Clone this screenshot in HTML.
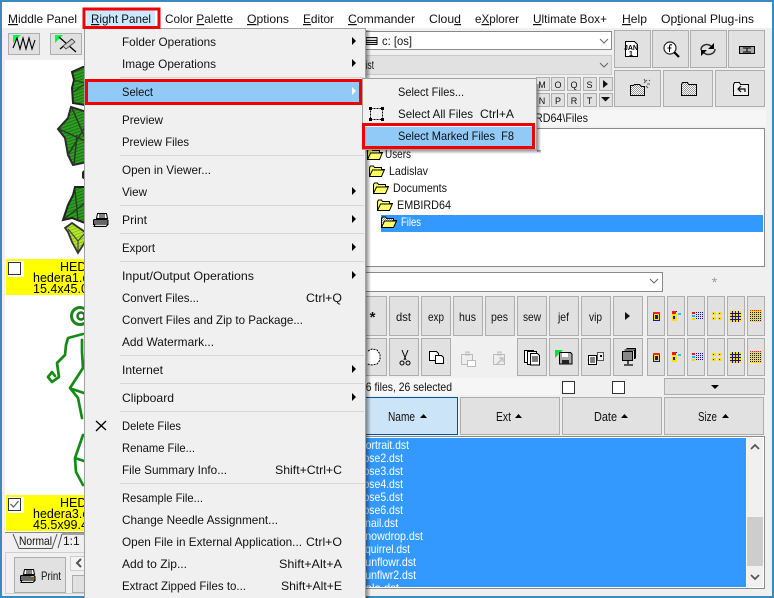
<!DOCTYPE html>
<html><head><meta charset="utf-8"><style>
html,body{margin:0;padding:0;background:#f0f0f0;width:774px;height:598px;overflow:hidden}
svg{display:block;position:absolute;left:0;top:0}
text{font-family:"Liberation Sans",sans-serif;font-size:12px;fill:#111;white-space:pre}
.b{fill:#e1e1e1;stroke:#adadad;stroke-width:1}
.w{fill:#fff;stroke:#8a8a8a;stroke-width:1}
.s{stroke:#d7d7d7;stroke-width:1}
.l{fill:#fff;font-size:12px}
.h{font-size:12.5px}
.y{font-size:12.5px;fill:#000}
.u{text-decoration:underline}
.a{font-size:9px}
</style></head><body>
<svg width="774" height="598" viewBox="0 0 774 598" xmlns="http://www.w3.org/2000/svg">
<defs>
<clipPath id="left"><rect x="5" y="60" width="80" height="538"/></clipPath>
<clipPath id="listc"><rect x="366" y="438" width="381" height="149"/></clipPath>
<linearGradient id="sh" x1="0" x2="1" y1="0" y2="0"><stop offset="0" stop-color="#000" stop-opacity=".42"/><stop offset="1" stop-color="#000" stop-opacity="0"/></linearGradient>
<linearGradient id="shv" x1="0" x2="0" y1="0" y2="1"><stop offset="0" stop-color="#000" stop-opacity=".38"/><stop offset="1" stop-color="#000" stop-opacity="0"/></linearGradient>
<pattern id="dith" width="2" height="2" patternUnits="userSpaceOnUse"><rect width="2" height="2" fill="#fff"/><rect width="1" height="1" fill="#999"/><rect x="1" y="1" width="1" height="1" fill="#999"/></pattern>
<pattern id="ydith" width="2" height="2" patternUnits="userSpaceOnUse"><rect width="2" height="2" fill="#ffff66"/><rect width="1" height="1" fill="#fff"/></pattern>
<pattern id="st" width="3" height="3" patternUnits="userSpaceOnUse" patternTransform="rotate(-20)"><rect width="3" height="3" fill="#2f9e22"/><rect width="3" height="1" fill="#1c7414"/></pattern>
<pattern id="st2" width="3" height="3" patternUnits="userSpaceOnUse" patternTransform="rotate(-20)"><rect width="3" height="3" fill="#b4e82a"/><rect width="3" height="1" fill="#8cc018"/></pattern>
<g id="printer"><path d="M4.500 .5h9l1 5h-11z" fill="#fff" stroke="#000"/><path d="M1 6.500h13l1 1v4H.5v-4z" fill="#666" stroke="#000"/><path d="M2 11.500l-1 2h12l2-2" fill="#ddd" stroke="#000"/><path d="M6 2h6M6 4h6" stroke="#000"/></g>
<g id="f1"><rect x="-3" y="-4" width="7" height="9" fill="#1010c0"/><rect x="-3" y="-4" width="7" height="2" fill="#ff2020"/><rect x="-2" y="-2" width="5" height="6" fill="#ffe000"/><rect x="-1" y="-1" width="3" height="4" fill="#1010c0"/></g>
<g id="f2"><rect x="-4" y="-5" width="4" height="3" fill="#ff1010"/><rect x="-4" y="-2" width="5" height="7" fill="#ffe000"/><rect x="-3" y="0" width="2" height="3" fill="#1010c0"/><rect x="2" y="-3" width="3" height="2" fill="#10d0e0"/><rect x="0" y="-5" width="1" height="1" fill="#1010c0"/></g>
<g id="f3"><rect x="-5" y="-4" width="3" height="2" fill="#ff1010"/><rect x="-5" y="-1" width="3" height="2" fill="#10c0e0"/><rect x="-5" y="2" width="3" height="2" fill="#ffd000"/><path d="M-1 -3.500h7M-1 -1.500h7M-1 .5h7M-1 2.500h7" stroke="#0a0a90" stroke-dasharray="1 1"/></g>
<g id="f4"><rect x="-4" y="-4" width="4" height="3" fill="#ffe000"/><rect x="2" y="-4" width="4" height="3" fill="#ffe000"/><rect x="-4" y="1" width="4" height="3" fill="#ffe000"/><rect x="2" y="1" width="4" height="3" fill="#ffe000"/><rect x="-3" y="-3" width="1" height="1" fill="#1010c0"/><rect x="3" y="-3" width="1" height="1" fill="#1010c0"/><rect x="-3" y="2" width="1" height="1" fill="#1010c0"/><rect x="3" y="2" width="1" height="1" fill="#1010c0"/></g>
<g id="f5"><rect x="-5" y="-5" width="11" height="11" fill="#101080"/><path d="M-5 -4h11M-5 -1h11M-5 2h11M-5 5h11" stroke="#ffe000" stroke-width="2" stroke-dasharray="2 1"/></g>
<g id="f6"><rect x="-6" y="-6" width="12" height="12" fill="#ffe000"/><path d="M-6 -5.500h12" stroke="#ff2020" stroke-dasharray="1 1"/><path d="M-6 -3.500h12M-6 -1.500h12M-6 .5h12M-6 2.500h12M-6 4.500h12" stroke="#101090" stroke-dasharray="1 1"/></g>
<g id="folder"><path d="M.5 3.500v9h12l3-7h-3v-2h-7l-1-1.500h-3z" fill="url(#ydith)" stroke="#000"/><path d="M.5 12.500l3-6.500h12" fill="none" stroke="#000"/></g>
<g id="folderS"><path d="M.5 3.500v9h12l3-7h-3v-2h-7l-1-1.500h-3z" fill="url(#dith)" stroke="#000"/><path d="M3.500 6h12l-3 6.500h-12z" fill="url(#ydith)" stroke="#000"/></g>
</defs>

<!-- window -->
<rect width="774" height="598" fill="#3b89bd"/>
<rect x="2" y="2" width="770" height="594" fill="#f0f0f0"/>
<rect x="2" y="2" width="770" height="26" fill="#fff"/>

<!-- left panel -->
<rect x="8.500" y="33.500" width="31" height="21" class="b"/>
<rect x="50.500" y="33.500" width="31" height="21" class="b"/>
<path d="M13 35h8l-8 8z" fill="#00ff40"/><path d="M13 48l4-10 3 11 3-11 3 11 3-11 3 11 3-9" fill="none" stroke="#000" stroke-width="1.100"/>
<path d="M55 35h8l-8 8z" fill="#00ff40"/><path d="M59 37l17 15M60 49l12-10" stroke="#000" stroke-width="1.300" fill="none"/><path d="M63 46l9-7 3 3-9 7z" fill="#ccc" stroke="#333" stroke-width=".7"/>
<rect x="5" y="60" width="80" height="472" fill="#fff"/>
<g clip-path="url(#left)">
<path d="M83 67L72 72l2 8-2 8 1 15 12 2V67z" fill="url(#st)" stroke="#222" stroke-width="2"/>
<path d="M71 107l-3 11-10 11 7 9 3 17 5 10 14-3V112z" fill="url(#st)" stroke="#2a2a2a" stroke-width="2"/>
<path d="M59 129l26 12M68 155l17-28M72 108l13 30M74 165l3-30" stroke="#2a3a2a" stroke-width="1.500" fill="none"/>
<path d="M74 80l11 3M73 92l12-8" stroke="#1b4a1b" stroke-width="1.300" fill="none"/>
<path d="M82 172l3-3v11l-3-2z" fill="#222"/>
<path d="M75 187l-2 8-5 10-5 15 9-2 13 5v-36z" fill="url(#st)" stroke="#222" stroke-width="2"/>
<path d="M64 219l21-16M75 190l3 30" stroke="#1f3f1f" stroke-width="1.300" fill="none"/>
<path d="M65 228l7-5 13 9v10l-7 11-6-11-4-10z" fill="url(#st2)" stroke="#333" stroke-width="1.800"/>
<path d="M68 229l10 12 0 10M78 241l7-8" stroke="#444" stroke-width="1.200" fill="none"/>
<circle cx="80" cy="316" r="8.500" fill="none" stroke="#1a861a" stroke-width="3"/><circle cx="81" cy="316" r="3.500" fill="none" stroke="#1a7a1a" stroke-width="2.500"/>
<g fill="none" stroke="#158a18" stroke-width="2.700" stroke-linejoin="round" stroke-linecap="round">
<path d="M83 334l-15 4-2 7-1 10-8 8 2 14-7 5-4-5 4-5 3 4"/>
<path d="M82 340v12l1 16-13 20 8 10 4 20M72 389l12 4"/>
<path d="M83 435l-8 23 1 14 7 13M75 458l9 3"/>
</g>
</g>
<rect x="6" y="259" width="79" height="36" fill="#ff0"/>
<rect x="8" y="261" width="16" height="16" fill="#fff"/>
<rect x="8.500" y="262.500" width="12" height="12" fill="#fff" stroke="#333"/>
<rect x="6" y="495" width="79" height="36" fill="#ff0"/>
<rect x="8" y="497" width="16" height="16" fill="#fff"/>
<rect x="8.500" y="498.500" width="12" height="12" fill="#fff" stroke="#333"/>
<path d="M10.500 504l3 3 5-6" fill="none" stroke="#666" stroke-width="1.300"/>
<text class="y" x="60" y="271">HED</text><text class="y" x="33" y="282">hedera1.e</text><text class="y" x="33" y="293">15.4x45.0</text>
<text class="y" x="60" y="507">HED</text><text class="y" x="33" y="518">hedera3.e</text><text class="y" x="33" y="529">45.5x99.4</text>
<path d="M5 532.500H85" stroke="#888"/>
<path d="M13 534l6 14.500h33l5-14.500" fill="#f0f0f0" stroke="#555"/>
<path d="M58 548l4-14M62 534h24" fill="none" stroke="#555"/>
<text x="19" y="545" textLength="33" lengthAdjust="spacingAndGlyphs" fill="#10204a">Normal</text>
<text x="63" y="545">1:1 N</text>
<rect x="5.500" y="552.500" width="90" height="41" fill="none" stroke="#d0d0d0"/>
<rect x="14.500" y="557.500" width="51" height="35" class="b"/>
<use href="#printer" x="20" y="569"/>
<rect x="31" y="576" width="3" height="1" fill="#e8c000"/>
<text x="41" y="580" textLength="20" lengthAdjust="spacingAndGlyphs">Print</text>
<rect x="70.500" y="556.500" width="20" height="14" fill="#f4f4f4" stroke="#ccc"/>
<path d="M81 559l-4 4 4 4" fill="none" stroke="#555" stroke-width="2"/>
<rect x="72.500" y="575.500" width="20" height="17" class="b"/>

<!-- right top -->
<rect x="345.500" y="31.500" width="266" height="18" class="w"/>
<rect x="366" y="37.500" width="11" height="7" fill="#ddd" stroke="#111"/><path d="M366 40.500h11M366 42.500h11" stroke="#111"/>
<text x="382" y="45" textLength="30" lengthAdjust="spacingAndGlyphs">c: [os]</text>
<path d="M600 39l4 4 4-4" fill="none" stroke="#666"/>
<rect x="345.500" y="55.500" width="266" height="19" fill="#e1e1e1" stroke="#c8c8c8"/>
<text x="360" y="69" textLength="14" lengthAdjust="spacingAndGlyphs" fill="#333">Dist</text>
<path d="M600 63l4 4 4-4" fill="none" stroke="#666"/>

<rect x="536.500" y="77.500" width="13" height="13" class="b"/><rect x="551.500" y="77.500" width="13" height="13" class="b"/><rect x="567.500" y="77.500" width="13" height="13" class="b"/><rect x="583.500" y="77.500" width="13" height="13" class="b"/><rect x="599.500" y="77.500" width="13" height="13" class="b"/>
<rect x="536.500" y="93.500" width="13" height="13" class="b"/><rect x="551.500" y="93.500" width="13" height="13" class="b"/><rect x="567.500" y="93.500" width="13" height="13" class="b"/><rect x="583.500" y="93.500" width="13" height="13" class="b"/><rect x="599.500" y="93.500" width="13" height="13" class="b"/>
<text class="a" x="542" y="88" text-anchor="middle">M</text><text class="a" x="558" y="88" text-anchor="middle">O</text><text class="a" x="574" y="88" text-anchor="middle">Q</text><text class="a" x="589.500" y="88" text-anchor="middle">S</text>
<text class="a" x="542" y="104" text-anchor="middle">N</text><text class="a" x="558" y="104" text-anchor="middle">P</text><text class="a" x="574" y="104" text-anchor="middle">R</text><text class="a" x="589.500" y="104" text-anchor="middle">T</text>
<path d="M603 80l5 4-5 4z M601 97h9l-4.500 4.500z" fill="#111"/>

<rect x="614.500" y="30.500" width="36" height="37" class="b"/><rect x="652.500" y="30.500" width="36" height="37" class="b"/><rect x="690.500" y="30.500" width="36" height="37" class="b"/><rect x="728.500" y="30.500" width="36" height="37" class="b"/>
<rect x="614.500" y="70.500" width="46" height="36" class="b"/><rect x="663.500" y="70.500" width="49" height="36" class="b"/><rect x="715.500" y="70.500" width="49" height="36" class="b"/>
<path d="M625.500 41.500h9l3 3v12h-12z" fill="#fff" stroke="#000"/>
<text x="631" y="50" text-anchor="middle" style="font-size:7px;font-weight:bold;fill:#000">JAN</text><text x="631" y="56" text-anchor="middle" style="font-size:7px;font-weight:bold;fill:#000">1</text>
<circle cx="670" cy="48" r="6" fill="#fff" stroke="#222" stroke-width="1.200"/><path d="M674 52l5 5" stroke="#000" stroke-width="2.200"/><path d="M672 45c-2-1-2.500 0-2.500 2v5M667.500 48h4" fill="none" stroke="#000"/>
<path d="M701 50c0-5 6-7 10-4M715 49c0 5-7 7-11 4" fill="none" stroke="#333" stroke-width="1.500"/><path d="M714 43v6h-6z M701 56v-6h6z" fill="#000"/>
<rect x="739.500" y="46.500" width="15" height="7" fill="#aaa" stroke="#000"/><path d="M743 48h8M743 52h8M747 48v4" stroke="#000"/>
<path d="M630.500 85.500h3l1-1h5l2 2h3v9h-14z" fill="url(#dith)" stroke="#000"/><path d="M644 83l3-3M647 84h3M646 86l2 2M645 81l-1-2M649 81l1-1" stroke="#555"/>
<path d="M681.500 84.500l1-2h5l1 2h8v11h-15z" fill="url(#dith)" stroke="#000"/>
<path d="M733.500 84.500l1-2h5l1 2h8v11h-15z" fill="#eee" stroke="#000"/><path d="M741 86l-3 3 3 3M738 89h7v3" fill="none" stroke="#000" stroke-width="1.200"/>

<rect x="350" y="110" width="416" height="16" fill="#f6f6f6"/>
<text x="535" y="122" textLength="53" lengthAdjust="spacingAndGlyphs">RD64\Files</text>
<rect x="350.500" y="128.500" width="414" height="138" fill="#fff" stroke="#8a8a8a"/>
<rect x="381" y="215" width="382" height="17" fill="#3399ff"/>
<use href="#folder" x="367" y="147"/><text x="385" y="158" textLength="26" lengthAdjust="spacingAndGlyphs" fill="#333">Users</text>
<use href="#folder" x="369" y="164"/><text x="389" y="175" textLength="39" lengthAdjust="spacingAndGlyphs" fill="#333">Ladislav</text>
<use href="#folder" x="373" y="181"/><text x="393" y="192" textLength="54" lengthAdjust="spacingAndGlyphs" fill="#333">Documents</text>
<use href="#folder" x="377" y="198"/><text x="397" y="209" textLength="54" lengthAdjust="spacingAndGlyphs" fill="#333">EMBIRD64</text>
<use href="#folderS" x="381" y="215"/><text x="401" y="226" textLength="20" lengthAdjust="spacingAndGlyphs" style="fill:#fff">Files</text>

<rect x="350.500" y="272.500" width="312" height="19" class="w"/>
<path d="M650 279l4 4 4-4" fill="none" stroke="#666"/>
<text x="714.500" y="287" text-anchor="middle" style="font-size:14px;fill:#999">*</text>

<g>
<rect x="357.500" y="296.500" width="29" height="39" class="b"/><rect x="389.500" y="296.500" width="29" height="39" class="b"/><rect x="421.500" y="296.500" width="29" height="39" class="b"/><rect x="453.500" y="296.500" width="29" height="39" class="b"/><rect x="485.500" y="296.500" width="29" height="39" class="b"/><rect x="517.500" y="296.500" width="29" height="39" class="b"/><rect x="549.500" y="296.500" width="29" height="39" class="b"/><rect x="581.500" y="296.500" width="29" height="39" class="b"/><rect x="613.500" y="296.500" width="29" height="39" class="b"/>
<rect x="357.500" y="338.500" width="29" height="37" class="b"/><rect x="389.500" y="338.500" width="29" height="37" class="b"/><rect x="421.500" y="338.500" width="29" height="37" class="b"/><rect x="517.500" y="338.500" width="29" height="37" class="b"/><rect x="549.500" y="338.500" width="29" height="37" class="b"/><rect x="581.500" y="338.500" width="29" height="37" class="b"/><rect x="613.500" y="338.500" width="29" height="37" class="b"/>
<rect x="647.500" y="296.500" width="17" height="39" class="b"/><rect x="667.500" y="296.500" width="17" height="39" class="b"/><rect x="687.500" y="296.500" width="17" height="39" class="b"/><rect x="707.500" y="296.500" width="17" height="39" class="b"/><rect x="727.500" y="296.500" width="17" height="39" class="b"/><rect x="747.500" y="296.500" width="17" height="39" class="b"/>
<rect x="647.500" y="338.500" width="17" height="37" class="b"/><rect x="667.500" y="338.500" width="17" height="37" class="b"/><rect x="687.500" y="338.500" width="17" height="37" class="b"/><rect x="707.500" y="338.500" width="17" height="37" class="b"/><rect x="727.500" y="338.500" width="17" height="37" class="b"/><rect x="747.500" y="338.500" width="17" height="37" class="b"/>
</g>
<text x="372.500" y="322" text-anchor="middle" style="font-size:15px;font-weight:bold">*</text>
<text x="396" y="321" textLength="15" lengthAdjust="spacingAndGlyphs">dst</text><text x="428" y="321" textLength="16" lengthAdjust="spacingAndGlyphs">exp</text><text x="459" y="321" textLength="17" lengthAdjust="spacingAndGlyphs">hus</text><text x="491" y="321" textLength="17" lengthAdjust="spacingAndGlyphs">pes</text><text x="523" y="321" textLength="18" lengthAdjust="spacingAndGlyphs">sew</text><text x="558" y="321" textLength="11" lengthAdjust="spacingAndGlyphs">jef</text><text x="589" y="321" textLength="13" lengthAdjust="spacingAndGlyphs">vip</text>
<path d="M625 312l5 4-5 4z" fill="#111"/>
<use href="#f1" x="656" y="316"/><use href="#f2" x="676" y="316"/><use href="#f3" x="697" y="316"/><use href="#f4" x="716" y="316"/><use href="#f5" x="735" y="316"/><use href="#f6" x="756" y="316"/>
<use href="#f1" x="656" y="357"/><use href="#f2" x="676" y="357"/><use href="#f3" x="697" y="357"/><use href="#f4" x="716" y="357"/><use href="#f5" x="735" y="357"/><use href="#f6" x="756" y="357"/>

<path d="M368 351l4-2 5 1 3 4 0 6-3 4-5 1-5-1" fill="#fff" stroke="#000" stroke-dasharray="2 1"/>
<path d="M402 350l4 10M408 350l-4 10" stroke="#000" fill="none"/><circle cx="402" cy="363" r="2" fill="none" stroke="#000"/><circle cx="408" cy="363" r="2" fill="none" stroke="#000"/>
<path d="M429.500 351.500h7l2 2v7h-9z" fill="#fff" stroke="#000"/><path d="M435.500 355.500h6l2 2v6h-8z" fill="#fff" stroke="#000"/>
<path d="M461.500 354.500h11v10h-11z M466 352h3v3h-3z" fill="#eee" stroke="#bbb"/><rect x="467.500" y="360.500" width="8" height="6" fill="#fff" stroke="#bbb"/>
<path d="M493.500 354.500h11v10h-11z M498 352h3v3h-3z" fill="#eee" stroke="#bbb"/><path d="M497 364l5-5M499 358h4v4" fill="none" stroke="#bbb" stroke-width="1.300"/>
<path d="M524.500 350.500h9v12h-9z" fill="#fff" stroke="#000"/><path d="M527.500 351.500h9v13h-9z" fill="#fff" stroke="#000"/><path d="M530.500 353.500h7l2 2v9.500h-9z" fill="#fff" stroke="#000"/><path d="M532 357h6M532 359h6M532 361h6" stroke="#000"/>
<path d="M555 350h8l-8 8z" fill="#00e040"/><path d="M559.500 352.500h11l1.500 1.500v10h-12.500z" fill="#aaa" stroke="#000"/><rect x="562" y="353" width="6" height="4" fill="#fff"/><rect x="562" y="360" width="7" height="4" fill="#222"/>
<path d="M588.500 355.500h8v9h-8z" fill="#fff" stroke="#000"/><path d="M590 358h5M590 360h5M590 362h5" stroke="#000"/><path d="M597.500 352.500h6v8h-6z" fill="#eee" stroke="#555"/><rect x="600" y="355" width="2" height="2" fill="#000"/>
<path d="M622.500 351.500h10v9h-10z" fill="#888" stroke="#000"/><path d="M624.500 350h10v9" fill="none" stroke="#000"/><path d="M626.500 348.500h9v10" fill="none" stroke="#000"/><path d="M628 361v3M624 365h9" stroke="#000" stroke-width="1.300"/>

<rect x="350" y="378" width="210" height="17" fill="#f6f6f6"/>
<text x="360" y="391" textLength="92" lengthAdjust="spacingAndGlyphs" fill="#222">26 files, 26 selected</text>
<rect x="562.500" y="381.500" width="12" height="12" fill="#fff" stroke="#333"/>
<rect x="612.500" y="381.500" width="12" height="12" fill="#fff" stroke="#333"/>
<rect x="664.500" y="378.500" width="100" height="16" class="b"/>
<path d="M711 385h8l-4 4z" fill="#000"/>
<rect x="350.500" y="397.500" width="107" height="37" fill="#cce4f7" stroke="#005499"/>
<rect x="460.500" y="397.500" width="99" height="37" class="b"/><rect x="562.500" y="397.500" width="99" height="37" class="b"/><rect x="664.500" y="397.500" width="99" height="37" class="b"/>
<text class="h" x="388" y="421" textLength="27" lengthAdjust="spacingAndGlyphs">Name</text><path d="M420 418l3.500-4 3.500 4z" fill="#000"/>
<text class="h" x="496" y="421" textLength="15" lengthAdjust="spacingAndGlyphs">Ext</text><path d="M515 418l3.500-4 3.500 4z" fill="#000"/>
<text class="h" x="594" y="421" textLength="23" lengthAdjust="spacingAndGlyphs">Date</text><path d="M621 418l3.500-4 3.500 4z" fill="#000"/>
<text class="h" x="698" y="421" textLength="19" lengthAdjust="spacingAndGlyphs">Size</text><path d="M722 418l3.500-4 3.500 4z" fill="#000"/>

<rect x="350.500" y="436.500" width="414" height="152" fill="#fff" stroke="#8a8a8a"/>
<rect x="350" y="438" width="396" height="149" fill="#3399ff"/>
<rect x="747" y="438" width="16" height="149" fill="#f0f0f0"/>
<rect x="747" y="517" width="16" height="49" fill="#cdcdcd"/>
<path d="M751 449l4-4 4 4M751 575l4 4 4-4" fill="none" stroke="#555" stroke-width="1.700"/>
<g clip-path="url(#listc)">
<text class="l" style="fill:#fff" x="360" y="449" textLength="49" lengthAdjust="spacingAndGlyphs">portrait.dst</text>
<text class="l" style="fill:#fff" x="360" y="462" textLength="43" lengthAdjust="spacingAndGlyphs">rose2.dst</text>
<text class="l" style="fill:#fff" x="360" y="475" textLength="43" lengthAdjust="spacingAndGlyphs">rose3.dst</text>
<text class="l" style="fill:#fff" x="360" y="488" textLength="43" lengthAdjust="spacingAndGlyphs">rose4.dst</text>
<text class="l" style="fill:#fff" x="360" y="501" textLength="43" lengthAdjust="spacingAndGlyphs">rose5.dst</text>
<text class="l" style="fill:#fff" x="360" y="514" textLength="43" lengthAdjust="spacingAndGlyphs">rose6.dst</text>
<text class="l" style="fill:#fff" x="360" y="527" textLength="38" lengthAdjust="spacingAndGlyphs">snail.dst</text>
<text class="l" style="fill:#fff" x="360" y="540" textLength="63" lengthAdjust="spacingAndGlyphs">snowdrop.dst</text>
<text class="l" style="fill:#fff" x="360" y="553" textLength="50" lengthAdjust="spacingAndGlyphs">squirrel.dst</text>
<text class="l" style="fill:#fff" x="360" y="566" textLength="56" lengthAdjust="spacingAndGlyphs">sunflowr.dst</text>
<text class="l" style="fill:#fff" x="360" y="579" textLength="56" lengthAdjust="spacingAndGlyphs">sunflwr2.dst</text>
<text class="l" style="fill:#fff" x="360" y="592" textLength="39" lengthAdjust="spacingAndGlyphs">tiala.dst</text>
</g>

<!-- menu bar -->
<rect x="87" y="9" width="68" height="19" fill="#cce8ff"/>
<text x="8" y="23" textLength="69" lengthAdjust="spacingAndGlyphs"><tspan class="u">M</tspan>iddle Panel</text>
<text x="91" y="23" textLength="60" lengthAdjust="spacingAndGlyphs"><tspan class="u">R</tspan>ight Panel</text>
<text x="165" y="23" textLength="68" lengthAdjust="spacingAndGlyphs">Color <tspan class="u">P</tspan>alette</text>
<text x="247" y="23" textLength="42" lengthAdjust="spacingAndGlyphs"><tspan class="u">O</tspan>ptions</text>
<text x="303" y="23" textLength="31" lengthAdjust="spacingAndGlyphs"><tspan class="u">E</tspan>ditor</text>
<text x="348" y="23" textLength="67" lengthAdjust="spacingAndGlyphs"><tspan class="u">C</tspan>ommander</text>
<text x="429" y="23" textLength="32" lengthAdjust="spacingAndGlyphs">Clou<tspan class="u">d</tspan></text>
<text x="475" y="23" textLength="44" lengthAdjust="spacingAndGlyphs">e<tspan class="u">X</tspan>plorer</text>
<text x="533" y="23" textLength="74" lengthAdjust="spacingAndGlyphs"><tspan class="u">U</tspan>ltimate Box+</text>
<text x="622" y="23" textLength="25" lengthAdjust="spacingAndGlyphs"><tspan class="u">H</tspan>elp</text>
<text x="661" y="23" textLength="93" lengthAdjust="spacingAndGlyphs">Op<tspan class="u">t</tspan>ional Plug-ins</text>

<!-- main menu -->
<rect x="366" y="30" width="5" height="568" fill="url(#sh)"/>
<rect x="84.500" y="28.500" width="281" height="575" fill="#f0f0f0" stroke="#a0a0a0"/>
<rect x="84" y="9" width="75" height="18.500" fill="none" stroke="#f00000" stroke-width="3"/>
<g class="s">
<path d="M120 77.500h244M120 155.500h244M120 205.500h244M120 233.500h244M120 261.500h244M120 355.500h244M120 383.500h244M120 411.500h244M120 483.500h244"/>
</g>
<rect x="88" y="82" width="271" height="20" fill="#91c9f7"/>
<rect x="86.500" y="80.500" width="274" height="23" fill="none" stroke="#f00000" stroke-width="3"/>
<text x="122" y="46" textLength="94" lengthAdjust="spacingAndGlyphs">Folder Operations</text>
<text x="122" y="68" textLength="94" lengthAdjust="spacingAndGlyphs">Image Operations</text>
<text x="122" y="96" textLength="31" lengthAdjust="spacingAndGlyphs">Select</text>
<text x="122" y="124" textLength="41" lengthAdjust="spacingAndGlyphs">Preview</text>
<text x="122" y="146" textLength="67" lengthAdjust="spacingAndGlyphs">Preview Files</text>
<text x="122" y="174" textLength="89" lengthAdjust="spacingAndGlyphs">Open in Viewer...</text>
<text x="122" y="196" textLength="25" lengthAdjust="spacingAndGlyphs">View</text>
<text x="122" y="224" textLength="25" lengthAdjust="spacingAndGlyphs">Print</text>
<text x="122" y="252" textLength="33" lengthAdjust="spacingAndGlyphs">Export</text>
<text x="122" y="280" textLength="132" lengthAdjust="spacingAndGlyphs">Input/Output Operations</text>
<text x="122" y="302" textLength="77" lengthAdjust="spacingAndGlyphs">Convert Files...</text>
<text x="306" y="302" textLength="36" lengthAdjust="spacingAndGlyphs">Ctrl+Q</text>
<text x="122" y="324" textLength="181" lengthAdjust="spacingAndGlyphs">Convert Files and Zip to Package...</text>
<text x="122" y="346" textLength="92" lengthAdjust="spacingAndGlyphs">Add Watermark...</text>
<text x="122" y="374" textLength="41" lengthAdjust="spacingAndGlyphs">Internet</text>
<text x="122" y="402" textLength="52" lengthAdjust="spacingAndGlyphs">Clipboard</text>
<text x="122" y="430" textLength="59" lengthAdjust="spacingAndGlyphs">Delete Files</text>
<text x="122" y="452" textLength="73" lengthAdjust="spacingAndGlyphs">Rename File...</text>
<text x="122" y="474" textLength="105" lengthAdjust="spacingAndGlyphs">File Summary Info...</text>
<text x="275" y="474" textLength="67" lengthAdjust="spacingAndGlyphs">Shift+Ctrl+C</text>
<text x="122" y="502" textLength="81" lengthAdjust="spacingAndGlyphs">Resample File...</text>
<text x="122" y="524" textLength="156" lengthAdjust="spacingAndGlyphs">Change Needle Assignment...</text>
<text x="122" y="546" textLength="180" lengthAdjust="spacingAndGlyphs">Open File in External Application...</text>
<text x="306" y="546" textLength="36" lengthAdjust="spacingAndGlyphs">Ctrl+O</text>
<text x="122" y="568" textLength="65" lengthAdjust="spacingAndGlyphs">Add to Zip...</text>
<text x="279" y="568" textLength="63" lengthAdjust="spacingAndGlyphs">Shift+Alt+A</text>
<text x="122" y="590" textLength="124" lengthAdjust="spacingAndGlyphs">Extract Zipped Files to...</text>
<text x="281" y="590" textLength="61" lengthAdjust="spacingAndGlyphs">Shift+Alt+E</text>
<path d="M352 37l4 4-4 4z M352 59l4 4-4 4z M352 187l4 4-4 4z M352 215l4 4-4 4z M352 243l4 4-4 4z M352 271l4 4-4 4z M352 365l4 4-4 4z M352 393l4 4-4 4z" fill="#000"/>
<path d="M352 87l4 4-4 4z" fill="#fff"/>
<use href="#printer" x="93" y="213"/>
<path d="M96 421l10 9M106 421l-10 10" stroke="#000" stroke-width="1.300" fill="none"/>

<!-- submenu -->
<rect x="537" y="84" width="4" height="68" fill="url(#sh)"/>
<rect x="366" y="150" width="175" height="4" fill="url(#shv)"/>
<rect x="362.500" y="78.500" width="174" height="71" fill="#f0f0f0" stroke="#a0a0a0"/>
<rect x="365" y="127" width="167" height="19" fill="#91c9f7"/>
<rect x="363.500" y="124.500" width="170" height="23" fill="none" stroke="#f00000" stroke-width="3"/>
<rect x="86.500" y="80.500" width="274" height="23" fill="none" stroke="#f00000" stroke-width="3"/>
<text x="398" y="96" textLength="66" lengthAdjust="spacingAndGlyphs">Select Files...</text>
<text x="398" y="118" textLength="75" lengthAdjust="spacingAndGlyphs">Select All Files</text>
<text x="480" y="118" textLength="34" lengthAdjust="spacingAndGlyphs">Ctrl+A</text>
<text x="398" y="140" textLength="116" lengthAdjust="spacingAndGlyphs">Select Marked Files  F8</text>
<rect x="370.500" y="108.500" width="12" height="11" fill="none" stroke="#000" stroke-dasharray="2 1"/>
<path d="M369 107h3v3h-3zM381 107h3v3h-3zM369 118h3v3h-3zM381 118h3v3h-3z" fill="#000"/>
</svg>
</body></html>
